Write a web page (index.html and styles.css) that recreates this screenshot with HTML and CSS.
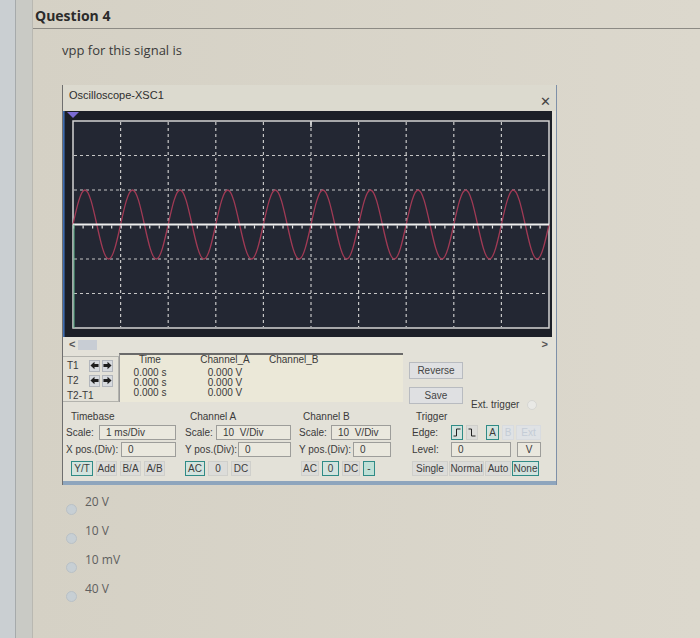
FILE: index.html
```html
<!DOCTYPE html>
<html>
<head>
<meta charset="utf-8">
<title>Question 4</title>
<link rel="stylesheet" href="styles.css">
</head>
<body>
<div class="page">
  <div class="rail"></div>
  <main class="main">
    <h2 class="qtitle">Question 4</h2>
    <p class="qtext">vpp for this signal is</p>

    <div class="scope">
      <div class="titlebar">
        <span class="title">Oscilloscope-XSC1</span>
        <span class="close">&#x2715;</span>
      </div>

      <div class="screen">
        <svg width="489" height="226" viewBox="0 0 489 226">
          <rect x="0" y="0" width="489" height="226" fill="#1c1f27"/>
          <rect x="10" y="10" width="476" height="207" fill="#232733" stroke="#d4d4d4" stroke-width="1.5"/>
          <g stroke="#c6c6c6" stroke-width="1.2" stroke-dasharray="3 3">
            <line x1="57.6" y1="11" x2="57.6" y2="216"/>
            <line x1="105.2" y1="11" x2="105.2" y2="216"/>
            <line x1="152.8" y1="11" x2="152.8" y2="216"/>
            <line x1="200.4" y1="11" x2="200.4" y2="216"/>
            <line x1="248" y1="11" x2="248" y2="216"/>
            <line x1="295.6" y1="11" x2="295.6" y2="216"/>
            <line x1="343.2" y1="11" x2="343.2" y2="216"/>
            <line x1="390.8" y1="11" x2="390.8" y2="216"/>
            <line x1="438.4" y1="11" x2="438.4" y2="216"/>
            <line x1="11" y1="44.5" x2="485" y2="44.5"/>
            <line x1="11" y1="79" x2="485" y2="79"/>
            <line x1="11" y1="148" x2="485" y2="148"/>
            <line x1="11" y1="182.5" x2="485" y2="182.5"/>
          </g>
          <line x1="248" y1="10" x2="248" y2="16" stroke="#e0e0e0" stroke-width="1.5"/>
          <path fill="none" stroke="#a13a55" stroke-width="1.3" d="M10,113.5
            c3.88,-17.67 7.59,-34.5 11.9,-34.5 c4.31,0 8.02,16.83 11.9,34.5 c3.88,17.67 7.59,34.5 11.9,34.5 c4.31,0 8.02,-16.83 11.9,-34.5
            c3.88,-17.67 7.59,-34.5 11.9,-34.5 c4.31,0 8.02,16.83 11.9,34.5 c3.88,17.67 7.59,34.5 11.9,34.5 c4.31,0 8.02,-16.83 11.9,-34.5
            c3.88,-17.67 7.59,-34.5 11.9,-34.5 c4.31,0 8.02,16.83 11.9,34.5 c3.88,17.67 7.59,34.5 11.9,34.5 c4.31,0 8.02,-16.83 11.9,-34.5
            c3.88,-17.67 7.59,-34.5 11.9,-34.5 c4.31,0 8.02,16.83 11.9,34.5 c3.88,17.67 7.59,34.5 11.9,34.5 c4.31,0 8.02,-16.83 11.9,-34.5
            c3.88,-17.67 7.59,-34.5 11.9,-34.5 c4.31,0 8.02,16.83 11.9,34.5 c3.88,17.67 7.59,34.5 11.9,34.5 c4.31,0 8.02,-16.83 11.9,-34.5
            c3.88,-17.67 7.59,-34.5 11.9,-34.5 c4.31,0 8.02,16.83 11.9,34.5 c3.88,17.67 7.59,34.5 11.9,34.5 c4.31,0 8.02,-16.83 11.9,-34.5
            c3.88,-17.67 7.59,-34.5 11.9,-34.5 c4.31,0 8.02,16.83 11.9,34.5 c3.88,17.67 7.59,34.5 11.9,34.5 c4.31,0 8.02,-16.83 11.9,-34.5
            c3.88,-17.67 7.59,-34.5 11.9,-34.5 c4.31,0 8.02,16.83 11.9,34.5 c3.88,17.67 7.59,34.5 11.9,34.5 c4.31,0 8.02,-16.83 11.9,-34.5
            c3.88,-17.67 7.59,-34.5 11.9,-34.5 c4.31,0 8.02,16.83 11.9,34.5 c3.88,17.67 7.59,34.5 11.9,34.5 c4.31,0 8.02,-16.83 11.9,-34.5
            c3.88,-17.67 7.59,-34.5 11.9,-34.5 c4.31,0 8.02,16.83 11.9,34.5 c3.88,17.67 7.59,34.5 11.9,34.5 c4.31,0 8.02,-16.83 11.9,-34.5"/>
          <line x1="10" y1="113.5" x2="486" y2="113.5" stroke="#eeeeee" stroke-width="2"/>
          <line x1="10" y1="116" x2="486" y2="116" stroke="#e4e4e4" stroke-width="3" stroke-dasharray="1.2 8.32"/>
          <line x1="11" y1="113.5" x2="11" y2="217" stroke="#5cb58a" stroke-width="1"/>
          <polygon points="4,1 16,1 10,7" fill="#7b6bd3"/>
          <line x1="0.8" y1="0" x2="0.8" y2="226" stroke="#3e6eb2" stroke-width="1.6"/>
        </svg>
      </div>

      <div class="scrollbar">
        <span class="chev">&lt;</span>
        <span class="thumb"></span>
        <span class="chev right">&gt;</span>
      </div>

      <div class="panel">
        <div class="toprow">
          <div class="cursors">
            <span class="clabel">T1</span>
            <span class="abtn"><svg width="9" height="9" viewBox="0 0 10 10"><polygon points="0.5,5 5,0.8 5,3.4 9.5,3.4 9.5,6.6 5,6.6 5,9.2" fill="#1e1e1e"/></svg></span>
            <span class="abtn"><svg width="9" height="9" viewBox="0 0 10 10"><polygon points="9.5,5 5,0.8 5,3.4 0.5,3.4 0.5,6.6 5,6.6 5,9.2" fill="#1e1e1e"/></svg></span>
            <span class="clabel">T2</span>
            <span class="abtn"><svg width="9" height="9" viewBox="0 0 10 10"><polygon points="0.5,5 5,0.8 5,3.4 9.5,3.4 9.5,6.6 5,6.6 5,9.2" fill="#1e1e1e"/></svg></span>
            <span class="abtn"><svg width="9" height="9" viewBox="0 0 10 10"><polygon points="9.5,5 5,0.8 5,3.4 0.5,3.4 0.5,6.6 5,6.6 5,9.2" fill="#1e1e1e"/></svg></span>
            <span class="clabel wide">T2-T1</span>
          </div>
          <div class="readout">
            <span class="rh c1">Time</span><span class="rh c2">Channel_A</span><span class="rh c3">Channel_B</span>
            <span class="c1">0.000 s</span><span class="c2">0.000 V</span><span class="c3"></span>
            <span class="c1">0.000 s</span><span class="c2">0.000 V</span><span class="c3"></span>
            <span class="c1">0.000 s</span><span class="c2">0.000 V</span><span class="c3"></span>
          </div>
          <div class="btncol">
            <span class="pbtn">Reverse</span>
            <span class="pbtn">Save</span>
          </div>
          <div class="ext">Ext. trigger <span class="dot"></span></div>
        </div>

        <div class="groups">
          <div class="grp tb">
            <div class="glabel">Timebase</div>
            <div class="row"><span class="lbl w33">Scale:</span><span class="box w77">1 ms/Div</span></div>
            <div class="row"><span class="lbl w55">X pos.(Div):</span><span class="box w55">0</span></div>
            <div class="brow">
              <span class="sb sel w22">Y/T</span><span class="sb w21">Add</span><span class="sb w21">B/A</span><span class="sb w21">A/B</span>
            </div>
          </div>
          <div class="grp cha">
            <div class="glabel">Channel A</div>
            <div class="row"><span class="lbl w31">Scale:</span><span class="box w75">10 &nbsp;V/Div</span></div>
            <div class="row"><span class="lbl w53">Y pos.(Div):</span><span class="box w53">0</span></div>
            <div class="brow">
              <span class="sb sel w20">AC</span><span class="sb w20">0</span><span class="sb w20">DC</span>
            </div>
          </div>
          <div class="grp chb">
            <div class="glabel">Channel B</div>
            <div class="row"><span class="lbl w32">Scale:</span><span class="box w60">10 &nbsp;V/Div</span></div>
            <div class="row"><span class="lbl w54">Y pos.(Div):</span><span class="box w38">0</span></div>
            <div class="brow">
              <span class="sb w18">AC</span><span class="sb sel w17">0</span><span class="sb w18">DC</span><span class="sb sel fill w12">-</span>
            </div>
          </div>
          <div class="grp trig">
            <div class="glabel">Trigger</div>
            <div class="row">
              <span class="lbl w39">Edge:</span>
              <span class="sb sel w12"><svg width="8" height="9" viewBox="0 0 8 9"><path d="M0.5,8 H3.5 V1 H7.5" fill="none" stroke="#222" stroke-width="1"/></svg></span>
              <span class="sb w12 m3"><svg width="8" height="9" viewBox="0 0 8 9"><path d="M0.5,1 H3.5 V8 H7.5" fill="none" stroke="#222" stroke-width="1"/></svg></span>
              <span class="sb sel w13 m8">A</span>
              <span class="sb dim w12 m3">B</span>
              <span class="sb dim w25 m2">Ext</span>
            </div>
            <div class="row">
              <span class="lbl w39">Level:</span><span class="box w60">0</span><span class="box w24 m6 center">V</span>
            </div>
            <div class="brow tight">
              <span class="sb w36">Single</span><span class="sb w35">Normal</span><span class="sb w26">Auto</span><span class="sb sel w27">None</span>
            </div>
          </div>
        </div>
      </div>
    </div>

    <ul class="options">
      <li><span class="radio"></span><span class="opt">20 V</span></li>
      <li><span class="radio"></span><span class="opt">10 V</span></li>
      <li><span class="radio"></span><span class="opt">10 mV</span></li>
      <li><span class="radio"></span><span class="opt">40 V</span></li>
    </ul>
  </main>
</div>
</body>
</html>
```

FILE: styles.css
```css
* { box-sizing: border-box; }
html, body { margin: 0; padding: 0; }
body {
  width: 700px;
  height: 638px;
  overflow: hidden;
  background: #d9d6cb;
  font-family: "Open Sans", "Liberation Sans", sans-serif;
}
.page { display: flex; height: 638px; }
.rail {
  width: 33px;
  flex: none;
  background: linear-gradient(to right, #cacfd2 0, #cacfd2 15px, #a6aaab 15px, #a6aaab 16px, #c9cac5 16px, #c9cac5 32px, #b9b8b1 32px);
}
.main { flex: 1; background: linear-gradient(to right, #d5d1c5, #dcd8cd); }

.qtitle {
  margin: 0;
  padding: 8px 0 4px 2px;
  font-size: 14px;
  line-height: 16px;
  font-weight: 700;
  color: #2b2b2b;
  border-bottom: 1px solid #8c8a84;
}
.qtext {
  margin: 12px 0 0 29px;
  font-size: 13px;
  line-height: 18px;
  color: #3a3a3a;
}

.scope {
  margin: 26px 0 0 29px;
  width: 495px;
  border-left: 1px solid #6f6f6f;
  border-right: 1px solid #7e90a8;
  background: #e3e1d8;
  font-family: "Liberation Sans", Arial, sans-serif;
  font-size: 10px;
  color: #3a3a3a;
}
.titlebar {
  height: 26px;
  display: flex;
  justify-content: space-between;
  align-items: flex-start;
  padding: 4px 5px 0 6px;
  background: #dcdacf;
}
.title { font-size: 11px; line-height: 13px; color: #2e2e2e; }
.close { font-size: 13px; line-height: 14px; margin-top: 6px; color: #444; }

.screen { height: 226px; margin-right: 4px; }
.screen svg { display: block; }

.scrollbar {
  height: 15px;
  display: flex;
  align-items: center;
  padding-left: 6px;
}
.chev { font-size: 11px; font-weight: 700; color: #555; line-height: 11px; }
.chev.right { margin-left: auto; margin-right: 8px; }
.thumb { width: 19px; height: 10px; background: #c8cdd4; margin-left: 3px; }

.panel { height: 133px; border-bottom: 4px solid #8ea5bd; }
.toprow { display: flex; height: 53px; align-items: flex-start; }

.cursors {
  margin-top: 4px;
  width: 56px;
  height: 46px;
  border: 1px solid #b3b3ad;
  border-left: none;
  display: grid;
  grid-template-columns: 20px 11px 11px;
  grid-template-rows: 13px 13px 14px;
  column-gap: 2px;
  row-gap: 2px;
  padding: 2px 0 0 4px;
  align-items: center;
}
.clabel { line-height: 12px; }
.clabel.wide { grid-column: 1 / span 3; }
.abtn {
  width: 11px; height: 12px;
  background: #d7dade;
  border: 1px solid #b2b6bc;
  display: flex; align-items: center; justify-content: center;
}

.readout {
  margin-top: 1px;
  width: 284px;
  height: 49px;
  border-top: 2px solid #6a6a6a;
  border-left: 1px solid #9a9a9a;
  background: #ebe8d8;
  display: grid;
  grid-template-columns: 42px 60px 70px;
  grid-template-rows: 13px 10px 10px 10px;
  padding-left: 9px;
  line-height: 10px;
}
.readout .c2 { margin-left: 24px; width: 60px; text-align: center; }
.readout .c3 { margin-left: 38px; }
.readout .c1 { text-align: center; }
.readout span { white-space: nowrap; }

.btncol {
  margin: 10px 0 0 6px;
  display: flex;
  flex-direction: column;
  gap: 8px;
}
.pbtn {
  width: 54px; height: 17px;
  background: #dfe0e2;
  border: 1px solid #b8bbc0;
  text-align: center;
  line-height: 15px;
  color: #444;
}
.ext {
  margin: 47px 0 0 8px;
  display: flex;
  align-items: center;
  line-height: 12px;
  white-space: nowrap;
}
.dot {
  width: 10px; height: 10px;
  border-radius: 50%;
  background: #e9e9e6;
  border: 1px solid #d6d6d2;
  margin-left: 8px;
}

.groups { display: flex; height: 76px; }
.grp { display: flex; flex-direction: column; padding-top: 6px; }
.grp.tb { width: 122px; padding-left: 3px; }
.grp.cha { width: 114px; }
.grp.chb { width: 112px; }
.grp.trig { flex: 1; padding-left: 1px; }
.glabel { line-height: 12px; }
.tb .glabel { padding-left: 5px; }
.cha .glabel { padding-left: 5px; }
.chb .glabel { padding-left: 4px; }
.trig .glabel { padding-left: 4px; }

.row { display: flex; align-items: center; height: 15px; margin-top: 2px; }
.lbl { white-space: nowrap; flex: none; }
.box {
  height: 15px;
  border: 1px solid #9d9d9a;
  background: #eae8de;
  padding-left: 6px;
  line-height: 13px;
  white-space: nowrap;
  flex: none;
}
.box.center { text-align: center; padding-left: 0; }

.brow { display: flex; gap: 3px; margin-top: 4px; height: 15px; }
.brow.tight { gap: 1px; }
.tb .brow { padding-left: 5px; }
.chb .brow { padding-left: 2px; }
.sb {
  height: 15px;
  background: #dcdcd9;
  border: 1px solid #cfcfcb;
  text-align: center;
  line-height: 13px;
  white-space: nowrap;
  display: flex; align-items: center; justify-content: center;
  flex: none;
  color: #3c3c3c;
}
.sb.sel { border: 1px solid #2f8b86; background: #d3e3de; }
.sb.fill { background: #bfe0d6; }
.sb.dim { color: #c4ccd6; background: #dfe2e5; border-color: #d8dbdf; }

.w12 { width: 12px; } .w13 { width: 13px; } .w17 { width: 17px; } .w18 { width: 18px; }
.w20 { width: 20px; } .w21 { width: 21px; } .w22 { width: 22px; } .w24 { width: 24px; }
.w25 { width: 25px; } .w26 { width: 26px; } .w27 { width: 27px; } .w31 { width: 31px; }
.w32 { width: 32px; } .w33 { width: 33px; } .w35 { width: 35px; } .w36 { width: 36px; }
.w38 { width: 38px; } .w39 { width: 39px; } .w53 { width: 53px; } .w54 { width: 54px; }
.w55 { width: 55px; } .w60 { width: 60px; } .w75 { width: 75px; } .w77 { width: 77px; }
.m2 { margin-left: 2px; } .m3 { margin-left: 3px; } .m6 { margin-left: 6px; } .m8 { margin-left: 8px; }

.options { list-style: none; margin: 9px 0 0 33px; padding: 0; }
.options li { display: flex; height: 29px; align-items: flex-start; }
.radio {
  width: 11px; height: 11px;
  margin-top: 10px;
  border-radius: 50%;
  background: #c7cfd4;
  border: 1px solid #b9c1c6;
  flex: none;
}
.opt {
  margin-left: 8px;
  font-size: 12px;
  line-height: 16px;
  color: #5f5f5f;
}
```
